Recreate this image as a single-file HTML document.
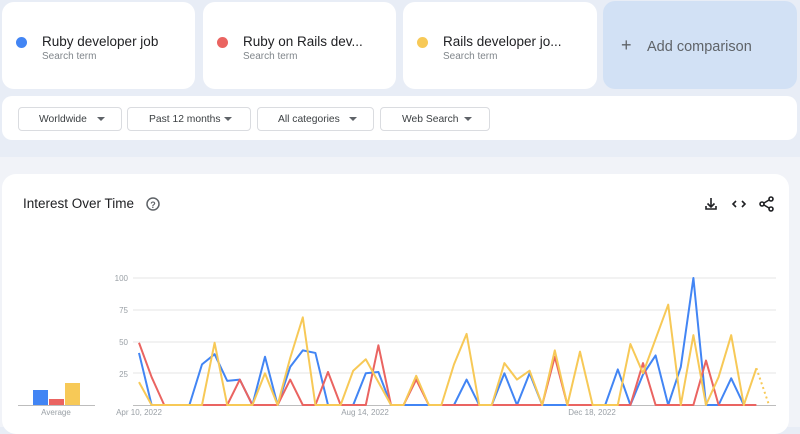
<!DOCTYPE html>
<html><head><meta charset="utf-8"><style>
*{margin:0;padding:0;box-sizing:border-box}
body{width:800px;height:427px;overflow:hidden;background:#e8edf6;font-family:"Liberation Sans",Arial,sans-serif;position:relative}
.card{position:absolute;top:2px;height:87px;background:#fff;border-radius:12px}
.dot{position:absolute;left:14px;top:35px;width:11px;height:11px;border-radius:50%}
.t{position:absolute;left:40px;top:32px;font-size:13.5px;color:#202124;white-space:nowrap}
.s{position:absolute;left:40px;top:49px;font-size:10px;color:#80868b}
.add{position:absolute;left:603px;top:1px;width:194px;height:88px;background:#d2e1f5;border-radius:12px;color:#5f6368;font-size:14.5px}
.bar{position:absolute;left:2px;top:96px;width:795px;height:44px;background:#fff;border-radius:10px}
.btn{position:absolute;top:107px;height:24px;border:1px solid #dadce0;border-radius:4px;font-size:10.3px;color:#3c4043;background:#fff;line-height:23px}
.btn i{position:absolute;top:9px;width:0;height:0;border-left:4px solid transparent;border-right:4px solid transparent;border-top:4px solid #5f6368}
.band{position:absolute;left:0;top:157px;width:800px;height:270px;background:#f1f3f8}
.main{position:absolute;left:2px;top:174px;width:787px;height:260px;background:#fff;border-radius:14px}
</style></head><body>
<div class="card" style="left:2px;width:193px"><div class="dot" style="background:#4285f4"></div><div class="t">Ruby developer job</div><div class="s">Search term</div></div>
<div class="card" style="left:203px;width:193px"><div class="dot" style="background:#ea6461"></div><div class="t">Ruby on Rails dev...</div><div class="s">Search term</div></div>
<div class="card" style="left:403px;width:194px"><div class="dot" style="background:#f7c957"></div><div class="t">Rails developer jo...</div><div class="s">Search term</div></div>
<div class="add"><span style="position:absolute;left:18px;top:35px;font-size:18px;line-height:18px">+</span><span style="position:absolute;left:44px;top:38px">Add comparison</span></div>
<div class="bar"></div>
<div class="btn" style="left:18px;width:104px"><span style="position:absolute;left:20px">Worldwide</span><i style="left:78px"></i></div>
<div class="btn" style="left:127px;width:124px"><span style="position:absolute;left:21px">Past 12 months</span><i style="left:96px"></i></div>
<div class="btn" style="left:257px;width:117px"><span style="position:absolute;left:20px">All categories</span><i style="left:91px"></i></div>
<div class="btn" style="left:380px;width:110px"><span style="position:absolute;left:21px">Web Search</span><i style="left:83px"></i></div>
<div class="band"></div>
<div class="main"></div>
<div style="position:absolute;left:23px;top:196px;font-size:13.5px;color:#202124">Interest Over Time</div>
<svg style="position:absolute;left:0;top:0" width="800" height="427">
<circle cx="153" cy="204" r="6" fill="none" stroke="#5f6368" stroke-width="1.5"/>
<text x="153" y="208" font-size="9" font-weight="bold" text-anchor="middle" fill="#5f6368" font-family="Liberation Sans">?</text>
<g stroke="#202124" stroke-width="1.6" fill="none">
<path d="M711 198v9M707.5 203.5l3.5 3.5 3.5-3.5M706 206v3h10v-3"/>
<path d="M736 201l-3 3 3 3M742 201l3 3-3 3"/>
<circle cx="771" cy="199" r="2"/><circle cx="762" cy="204" r="2"/><circle cx="771" cy="209" r="2"/>
<path d="M769 200l-5 3M764 205l5 3"/>
</g>
<g stroke="#e6e6e6" stroke-width="1">
<line x1="133" y1="278" x2="776" y2="278"/><line x1="133" y1="310" x2="776" y2="310"/><line x1="133" y1="342" x2="776" y2="342"/><line x1="133" y1="373" x2="776" y2="373"/>
</g>
<line x1="133" y1="405.5" x2="776" y2="405.5" stroke="#bdbdbd"/>
<line x1="18" y1="405.5" x2="95" y2="405.5" stroke="#bdbdbd"/>
<g font-size="8" fill="#9aa0a6" font-family="Liberation Sans" text-anchor="end">
<text x="128" y="281">100</text><text x="128" y="313">75</text><text x="128" y="345">50</text><text x="128" y="377">25</text>
</g>
<g font-size="8" fill="#9aa0a6" font-family="Liberation Sans" text-anchor="middle">
<text x="139" y="415">Apr 10, 2022</text><text x="365" y="415">Aug 14, 2022</text><text x="592" y="415">Dec 18, 2022</text><text x="56" y="415">Average</text>
</g>
<rect x="33" y="390" width="15" height="15" fill="#4285f4"/>
<rect x="49" y="399" width="15" height="6" fill="#ea6461"/>
<rect x="65" y="383" width="15" height="22" fill="#f7c957"/>
<g transform="translate(139,405) scale(12.6,-1.27)" fill="none" stroke-width="2" stroke-linejoin="round">
<polyline vector-effect="non-scaling-stroke" stroke="#4285f4" points="0,41 1,0 2,0 3,0 4,0 5,32 6,40 7,19 8,20 9,0 10,38 11,0 12,30 13,43 14,41 15,0 16,0 17,0 18,25 19,26 20,0 21,0 22,0 23,0 24,0 25,0 26,20 27,0 28,0 29,25 30,0 31,25 32,0 33,0 34,0 35,0 36,0 37,0 38,28 39,0 40,24 41,39 42,0 43,30 44,100 45,0 46,0 47,21 48,0"/>
<polyline vector-effect="non-scaling-stroke" stroke="#ea6461" points="0,49 1,22 2,0 3,0 4,0 5,0 6,0 7,0 8,20 9,0 10,0 11,0 12,20 13,0 14,0 15,26 16,0 17,0 18,0 19,47 20,0 21,0 22,20 23,0 24,0 25,0 26,0 27,0 28,0 29,0 30,0 31,0 32,0 33,38 34,0 35,0 36,0 37,0 38,0 39,0 40,33 41,0 42,0 43,0 44,0 45,35 46,0 47,0 48,0 49,0"/>
<polyline vector-effect="non-scaling-stroke" stroke="#f7c957" points="0,18 1,0 2,0 3,0 4,0 5,0 6,49 7,0 8,0 9,0 10,25 11,0 12,37 13,69 14,0 15,0 16,0 17,27 18,36 19,18 20,0 21,0 22,23 23,0 24,0 25,32 26,56 27,0 28,0 29,33 30,20 31,27 32,0 33,43 34,0 35,42 36,0 37,0 38,0 39,48 40,25 41,52 42,79 43,0 44,55 45,0 46,22 47,55 48,0 49,29"/>
<polyline vector-effect="non-scaling-stroke" stroke="#f7c957" stroke-dasharray="2 3" points="49,29 50,0"/>
</g>
</svg>
</body></html>
